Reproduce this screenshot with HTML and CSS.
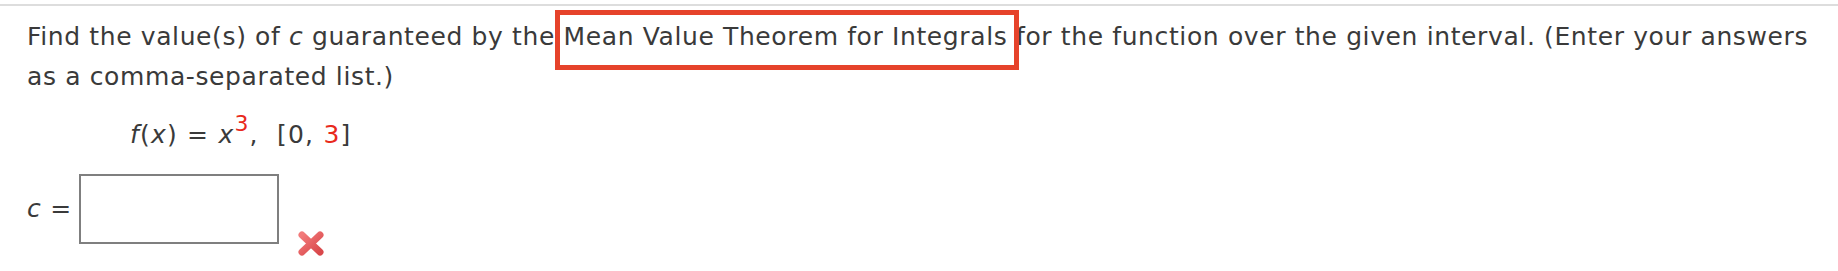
FILE: index.html
```html
<!DOCTYPE html>
<html>
<head>
<meta charset="utf-8">
<link rel="stylesheet" href="styles.css">
</head>
<body>
<div class="rule"></div>
<div class="question">
  <p class="prompt">Find the value(s) of <i>c</i> guaranteed by the <span class="hl">Mean Value Theorem for Integrals</span> for the function over the given interval. (Enter your answers as a comma-separated list.)</p>
  <div class="math"><i>f</i>(<i>x</i>) = <i>x</i><sup class="red">3</sup>,&nbsp; [0, <span class="red">3</span>]</div>
  <div class="answer">
    <span class="lbl"><i>c</i> =</span>
    <span class="box"></span>
    <svg class="xicon" width="28" height="27" viewBox="0 0 28 27">
      <defs>
        <linearGradient id="g" x1="0" y1="0" x2="1" y2="1">
          <stop offset="0" stop-color="#f27a7a"/>
          <stop offset="1" stop-color="#d9484b"/>
        </linearGradient>
      </defs>
      <path d="M5 5 L23 22 M23 5 L5 22" stroke="url(#g)" stroke-width="7" stroke-linecap="round" fill="none"/>
    </svg>
  </div>
</div>
</body>
</html>
```
FILE: styles.css
```css
html, body {
  margin: 0;
  padding: 0;
  background: #ffffff;
}
body {
  width: 1838px;
  height: 271px;
  overflow: hidden;
  font-family: "DejaVu Sans", Verdana, sans-serif;
  color: #3a3a3a;
}
.rule {
  height: 2px;
  margin-top: 4px;
  background: #dddddd;
}
.question {
  padding-left: 27px;
}
.prompt {
  margin: 11px 0 0 0;
  font-size: 25px;
  letter-spacing: 0.62px;
  line-height: 40px;
  width: 1800px;
}
.hl {
  position: relative;
}
.hl::after {
  content: "";
  position: absolute;
  left: -9px;
  right: -12px;
  top: -12px;
  height: 60px;
  box-sizing: border-box;
  border: 5px solid #e6432b;
  pointer-events: none;
}
.math {
  margin: 18px 0 0 103px;
  font-size: 25px;
  letter-spacing: 1.2px;
  line-height: 40px;
}
.math sup {
  font-size: 22px;
  line-height: 0;
  vertical-align: 12px;
}
.red {
  color: #e8291c;
}
.answer {
  display: flex;
  align-items: center;
  margin-top: 5px;
  font-size: 25px;
  letter-spacing: 0.75px;
}
.lbl {
  width: 52px;
}
.box {
  display: block;
  width: 196px;
  height: 66px;
  border: 2px solid #7f7f7f;
}
.xicon {
  display: block;
  margin: 70px 0 0 18px;
}
```
